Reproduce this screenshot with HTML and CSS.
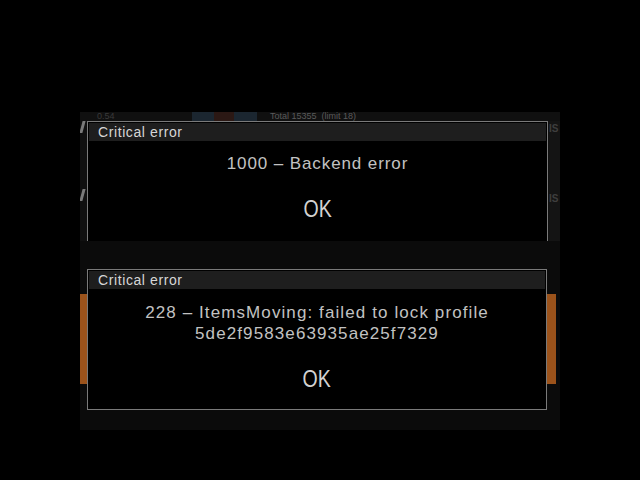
FILE: index.html
```html
<!DOCTYPE html>
<html>
<head>
<meta charset="utf-8">
<link rel="stylesheet" href="styles.css">
</head>
<body>
<div class="page">
  <section class="panel panel-top">
    <div class="bg-strip">
      <span class="bg-num">0.54</span>
      <span class="bg-bar"><i class="b1"></i><i class="b2"></i><i class="b3"></i></span>
      <span class="bg-total">Total 15355 &nbsp;(limit 18)</span>
    </div>
    <div class="row">
      <div class="side-left">
        <span class="glyph g1"></span>
        <span class="glyph g2"></span>
      </div>
      <div class="dialog dialog-open">
        <div class="title">Critical error</div>
        <div class="msg msg-one">1000 – Backend error</div>
        <div class="ok ok-one">OK</div>
      </div>
      <div class="side-right">
        <span class="is is1">IS</span>
        <span class="is is2">IS</span>
      </div>
    </div>
  </section>
  <section class="panel panel-bottom">
    <div class="row row-bottom">
      <div class="orange orange-left"></div>
      <div class="dialog dialog-closed">
        <div class="title">Critical error</div>
        <div class="msg msg-two">228 – ItemsMoving: failed to lock profile<br>5de2f9583e63935ae25f7329</div>
        <div class="ok ok-two">OK</div>
      </div>
      <div class="orange orange-right"></div>
    </div>
  </section>
</div>
</body>
</html>
```

FILE: styles.css
```css
html, body {
  margin: 0;
  padding: 0;
  background: #000;
}
body {
  width: 640px;
  height: 480px;
  overflow: hidden;
  font-family: "Liberation Sans", "DejaVu Sans", sans-serif;
}
.page {
  padding-top: 112px;
  margin-left: 80px;
  width: 480px;
}
.panel {
  position: relative;
  overflow: hidden;
}
.panel-top {
  height: 129px;
  background: #101010;
}
.bg-strip {
  height: 9px;
  display: flex;
  align-items: center;
  overflow: hidden;
  color: #3a3a3a;
  font-size: 9px;
  line-height: 9px;
}
.bg-num {
  margin-left: 17px;
  width: 95px;
}
.bg-bar {
  display: flex;
  height: 9px;
  width: 65px;
}
.bg-bar i { display: block; height: 9px; }
.bg-bar .b1 { width: 22px; background: #1b2630; }
.bg-bar .b2 { width: 20px; background: #2b1814; }
.bg-bar .b3 { width: 23px; background: #1b2630; }
.bg-total {
  margin-left: 13px;
  color: #5a5a5a;
}
.row {
  display: flex;
  align-items: flex-start;
}
.side-left {
  width: 7px;
  height: 120px;
  position: relative;
}
.glyph {
  position: absolute;
  left: 1px;
  width: 3px;
  height: 12px;
  background: #7a7a7a;
  transform: skewX(-15deg);
}
.g1 { top: 0; }
.g2 { top: 68px; }
.side-right {
  width: 11px;
  height: 120px;
  margin-left: 1px;
  background: #141414;
  position: relative;
}
.is {
  position: absolute;
  left: 0;
  color: #3e3e3e;
  font-size: 10px;
  font-weight: bold;
}
.is1 { top: 2px; }
.is2 { top: 72px; }
.dialog {
  background: #000;
  border: 1px solid #7a7a7a;
  box-sizing: border-box;
  display: flex;
  flex-direction: column;
  align-items: center;
}
.dialog-open {
  width: 462px;
  height: 120px;
  border-bottom: none;
}
.title {
  align-self: stretch;
  margin: 1px 1px 0 1px;
  height: 18px;
  background: #1e1e1e;
  color: #d6d6d6;
  font-size: 14px;
  letter-spacing: 0.6px;
  line-height: 18px;
  padding-left: 9px;
}
.msg {
  color: #c2c2c2;
  font-size: 17px;
  letter-spacing: 0.9px;
  text-align: center;
}
.msg-one {
  margin-top: 13px;
  line-height: 20px;
}
.ok {
  color: #d2d2d2;
  font-size: 23px;
  line-height: 26px;
  transform: scaleX(0.85);
}
.ok-one { margin-top: 22px; }
.panel-bottom {
  height: 189px;
  background: #0b0b0b;
}
.row-bottom {
  padding-top: 28px;
}
.orange {
  background: #9c531b;
  height: 90px;
  margin-top: 25px;
}
.orange-left { width: 7px; }
.orange-right { width: 9px; }
.dialog-closed {
  width: 460px;
  height: 141px;
}
.msg-two {
  margin-top: 13px;
  line-height: 21px;
  letter-spacing: 1.1px;
}
.ok-two { margin-top: 22px; }
```
